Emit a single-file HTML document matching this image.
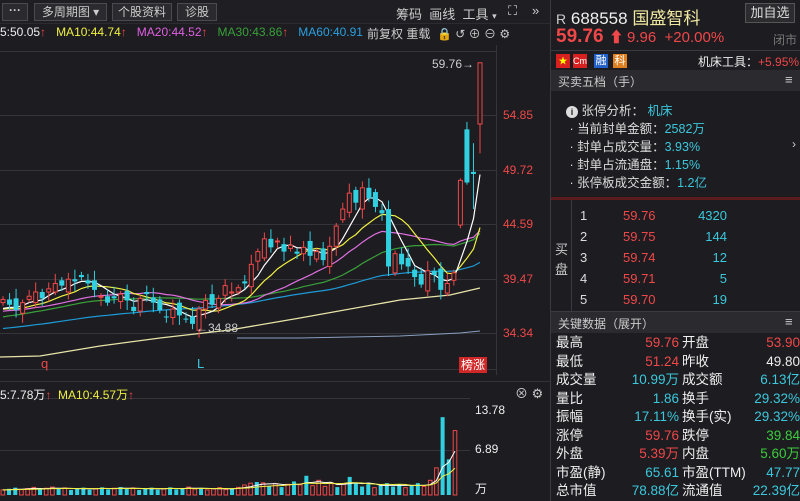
<!DOCTYPE html>
<html><head><meta charset="utf-8"><style>
*{margin:0;padding:0;box-sizing:border-box}
body{width:800px;height:501px;background:#1c1c21;font-family:"Liberation Sans","Noto Sans CJK SC",sans-serif;color:#ddd;overflow:hidden;position:relative;font-size:12px}
.a{position:absolute;white-space:nowrap}
.btn{position:absolute;top:3px;height:18px;border:1px solid #4a4a50;background:#2a2a2f;color:#ccc;font-size:12px;line-height:16px;text-align:center}
.r{color:#f04848}.c{color:#3cc8dc}.g{color:#3ccc3c}.w{color:#eee}.y{color:#f0f040}
.row{position:absolute;left:556px;width:244px;height:18px;font-size:13.5px;line-height:18px}
.row span{position:absolute}
</style></head><body>
<div class="a" style="left:0;top:0;width:550px;height:24px;background:#1e1e23;border-bottom:1px solid #2c2c30"></div>
<div class="btn" style="left:2px;width:26px;font-weight:bold;line-height:13px">···</div>
<div class="btn" style="left:34px;width:73px">多周期图 ▾</div>
<div class="btn" style="left:112px;width:60px">个股资料</div>
<div class="btn" style="left:177px;width:40px">诊股</div>
<div class="a" style="left:396px;top:4px;font-size:13px;color:#ccc">筹码&nbsp;&nbsp;画线&nbsp;&nbsp;工具 <span style="font-size:9px">▾</span></div>
<div class="a" style="left:508px;top:3px;font-size:13px;color:#ccc">⛶</div>
<div class="a" style="left:532px;top:3px;font-size:13px;color:#ccc">»</div>
<div class="a" style="left:0;top:25px;font-size:12px"><span class="w">5:50.05</span><span class="r">↑</span>&nbsp;&nbsp;&nbsp;<span class="y">MA10:44.74</span><span class="r">↑</span>&nbsp;&nbsp;&nbsp;<span style="color:#e060e0">MA20:44.52</span><span class="r">↑</span>&nbsp;&nbsp;&nbsp;<span style="color:#3aa03a">MA30:43.86</span><span class="r">↑</span>&nbsp;&nbsp;&nbsp;<span style="color:#2aa0e0">MA60:40.91</span></div>
<div class="a" style="left:367px;top:25px;font-size:12px;color:#ccc">前复权&nbsp;重载&nbsp;&nbsp;🔒&nbsp;↺&nbsp;⊕&nbsp;⊖&nbsp;⚙</div>
<svg class="a" style="left:0;top:0" width="550" height="501" id="sv"></svg>
<div class="a r" style="left:503px;top:108px">54.85</div>
<div class="a r" style="left:503px;top:163px">49.72</div>
<div class="a r" style="left:503px;top:217px">44.59</div>
<div class="a r" style="left:503px;top:272px">39.47</div>
<div class="a r" style="left:503px;top:326px">34.34</div>
<div class="a" style="left:432px;top:57px;color:#ccc">59.76→</div>
<div class="a" style="left:196px;top:321px;color:#ccc">←34.88</div>
<div class="a r" style="left:41px;top:356px;font-size:13px">q</div>
<div class="a c" style="left:197px;top:356px;font-size:13px">L</div>
<div class="a" style="left:459px;top:357px;background:#d02828;color:#fff;font-size:12px;line-height:16px;padding:0 2px">榜涨</div>
<div class="a" style="left:0;top:386px;font-size:12px"><span class="w">5:7.78万</span><span class="r">↑</span>&nbsp;&nbsp;<span class="y">MA10:4.57万</span><span class="r">↑</span></div>
<div class="a" style="left:515px;top:383px;color:#ccc;font-size:13px">⊗ ⚙</div>
<div class="a w" style="left:475px;top:403px">13.78</div>
<div class="a w" style="left:475px;top:442px">6.89</div>
<div class="a w" style="left:475px;top:480px">万</div>
<div class="a" style="left:550px;top:0;width:1px;height:501px;background:#3a3a40"></div>
<div class="a" style="left:556px;top:4px;font-size:17px"><span style="color:#ccc;font-size:14px">R</span> <span class="w">688558</span> <span style="color:#f0e8a0">国盛智科</span></div>
<div class="a" style="left:745px;top:3px;width:50px;height:20px;border:1px solid #555;background:#2c2c30;color:#ddd;font-size:13px;line-height:18px;text-align:center">加自选</div>
<div class="a r" style="left:556px;top:26px;font-size:19px;font-weight:bold">59.76 <span style="font-size:15px">⬆</span></div>
<div class="a r" style="left:627px;top:29px;font-size:15px">9.96&nbsp;&nbsp;+20.00%</div>
<div class="a" style="left:773px;top:31px;color:#777;font-size:12px">闭市</div>
<div class="a" style="left:551px;top:50px;width:249px;height:1px;background:#3a3a40"></div>
<div class="a" style="left:556px;top:54px;width:14px;height:14px;background:#d82020;color:#ff0;font-size:9px;line-height:14px;text-align:center">★</div>
<div class="a" style="left:573px;top:54px;width:14px;height:14px;background:#d82020;color:#fff;font-size:9px;line-height:14px;text-align:center">Cm</div>
<div class="a" style="left:594px;top:54px;width:14px;height:14px;background:#2060c8;color:#fff;font-size:11px;line-height:14px;text-align:center">融</div>
<div class="a" style="left:613px;top:54px;width:14px;height:14px;background:#e08020;color:#fff;font-size:11px;line-height:14px;text-align:center">科</div>
<div class="a" style="left:698px;top:53px;font-size:12px"><span class="w">机床工具：</span><span class="r">+5.95%</span></div>
<div class="a" style="left:551px;top:70px;width:249px;height:21px;background:#2a2a2f"></div>
<div class="a" style="left:558px;top:73px;color:#ccc;font-size:12px">买卖五档（手）</div>
<div class="a" style="left:785px;top:72px;color:#ccc;font-size:13px">≡</div>
<div class="a" style="left:566px;top:102px;font-size:12.5px;line-height:18px;color:#ddd">
<div><span style="display:inline-block;width:12px;height:12px;border-radius:6px;background:#ddd;color:#222;font-size:9px;text-align:center;line-height:12px;font-weight:bold">i</span> 张停分析： <span class="c">机床</span></div>
<div>&nbsp;· 当前封单金额：<span class="c">2582万</span></div>
<div>&nbsp;· 封单占成交量：<span class="c">3.93%</span></div>
<div>&nbsp;· 封单占流通盘：<span class="c">1.15%</span></div>
<div>&nbsp;· 张停板成交金额：<span class="c">1.2亿</span></div>
</div>
<div class="a" style="left:792px;top:137px;color:#ccc">›</div>
<div class="a" style="left:551px;top:197px;width:249px;height:3px;background:#5a1c1c"></div>
<div class="a" style="left:571px;top:200px;width:1px;height:111px;background:#3a3a40"></div>
<div class="a" style="left:555px;top:240px;color:#ccc;font-size:13px;line-height:20px">买<br>盘</div>
<div class="a" style="left:580px;top:205px;font-size:13px;line-height:21px;color:#ddd">1<br>2<br>3<br>4<br>5</div>
<div class="a r" style="left:623px;top:205px;font-size:13px;line-height:21px">59.76<br>59.75<br>59.74<br>59.71<br>59.70</div>
<div class="a c" style="left:676px;top:205px;width:51px;text-align:right;font-size:13px;line-height:21px">4320<br>144<br>12<br>5<br>19</div>
<div class="a" style="left:551px;top:311px;width:249px;height:22px;background:#2a2a2f;border-top:1px solid #3a3a40"></div>
<div class="a" style="left:558px;top:315px;color:#ccc;font-size:12px">关键数据（展开）</div>
<div class="a" style="left:785px;top:314px;color:#ccc;font-size:13px">≡</div>
<div id="kd"></div>
<script>
var rows=[["最高","59.76","r","开盘","53.90","r"],["最低","51.24","r","昨收","49.80","w"],["成交量","10.99万","c","成交额","6.13亿","c"],["量比","1.86","c","换手","29.32%","c"],["振幅","17.11%","c","换手(实)","29.32%","c"],["涨停","59.76","r","跌停","39.84","g"],["外盘","5.39万","r","内盘","5.60万","g"],["市盈(静)","65.61","c","市盈(TTM)","47.77","c"],["总市值","78.88亿","c","流通值","22.39亿","c"]];
var h="";rows.forEach(function(r,i){var t=334+i*18.5;h+='<div class="row" style="top:'+t+'px"><span class="w" style="left:0">'+r[0]+'</span><span class="'+r[2]+'" style="right:121px">'+r[1]+'</span><span class="w" style="left:126px">'+r[3]+'</span><span class="'+r[5]+'" style="right:0">'+r[4]+'</span></div>'});
document.getElementById("kd").innerHTML=h;
var S='';
function L(x1,y1,x2,y2,c){S+='<line x1="'+x1+'" y1="'+y1+'" x2="'+x2+'" y2="'+y2+'" stroke="'+c+'" stroke-width="1"/>';}
[51,115,170,224,279,333,369].forEach(function(y){L(0,y+.5,497,y+.5,"#34343a")});
L(496.5,45,496.5,375,"#34343a");
L(0,381.5,550,381.5,"#333");L(0,398.5,470,398.5,"#34343a");L(0,450.5,470,450.5,"#34343a");
var C=[37.5,37.0,36.5,37.2,37.8,38.2,37.6,38.5,39.0,38.8,39.4,39.2,39.6,39.0,38.4,37.8,37.2,37.6,38.0,37.4,36.4,37.6,38.0,37.2,36.5,35.8,36.6,36.0,35.6,35.2,36.6,37.4,37.0,37.6,38.8,38.2,38.6,39.0,40.8,42.0,43.2,42.4,43.0,42.0,42.6,41.8,42.4,41.6,42.0,41.2,42.5,44.4,46.0,47.5,46.6,48.0,47.0,46.2,45.6,40.6,41.8,40.8,40.6,39.6,38.9,40.2,39.8,38.4,39.0,40.0,48.7,48.5,49.3,59.76];
var O=[],Hh=[],Lw=[];
for(var i=0;i<C.length;i++){var p=i?C[i-1]:37.8;var o=p+((i*7%5)-2)*0.3;O.push(o);Hh.push(Math.max(o,C[i])+0.3+(i%3)*0.3);Lw.push(Math.min(o,C[i])-0.3-(i%4)*0.2);}
O[70]=44.5;Hh[70]=48.9;Lw[70]=44.2;O[71]=53.5;Hh[71]=54.2;Lw[71]=48.3;O[72]=49.5;Hh[72]=52.2;Lw[72]=46.0;O[73]=54.0;Hh[73]=59.76;Lw[73]=51.24;
O[59]=46.0;
var N=C.length;function X(i){return 3+i*477/(N-1)}function Y(p){return 115+(54.85-p)*10.63}
var pad=[];for(var k=0;k<60;k++)pad.push(32.5+k*0.07+Math.sin(k/6)*0.6);var A=pad.concat(C);
function ma(n,c){var pts=[];for(var i=0;i<N;i++){var s=0;for(var j=0;j<n;j++)s+=A[60+i-j];pts.push(X(i).toFixed(1)+','+Y(s/n).toFixed(1));}S+='<polyline fill="none" stroke="'+c+'" stroke-width="1.2" points="'+pts.join(' ')+'"/>';}
S+='<polyline fill="none" stroke="#e8e4a8" stroke-width="1.3" points="0,357 40,356 100,346 160,338 230,330 300,318 400,300 450,295 480,288"/>';
S+='<polyline fill="none" stroke="#8aa0c0" stroke-width="1" points="237,338 300,338 400,336 460,333 480,331"/>';
ma(60,"#1e9ad6");ma(30,"#3aa03a");ma(20,"#e070e0");ma(10,"#f0f040");ma(5,"#ffffff");
for(var i=0;i<N;i++){var x=X(i),up=C[i]>=O[i],col=up?"#f04848":"#30d0e0";L(x,Y(Hh[i]),x,Y(Lw[i]),col);var t=Y(Math.max(O[i],C[i])),b=Y(Math.min(O[i],C[i]));if(b-t<1)b=t+1;
S+=up?'<rect x="'+(x-2)+'" y="'+t+'" width="4" height="'+(b-t)+'" fill="#1c1c21" stroke="'+col+'"/>':'<rect x="'+(x-2.5)+'" y="'+t+'" width="5" height="'+(b-t)+'" fill="'+col+'"/>';}
var vs=[];for(var i=0;i<N;i++){var v=0.9+((i*37)%11)/20;if(i>38)v=1.4+((i*13)%9)/8;if(i>55)v=1.3+((i*7)%5)/5;vs.push(v);}
vs[69]=2.6;vs[70]=4.8;vs[71]=13.78;vs[72]=6.3;vs[73]=11.4;vs[49]=3.4;vs[51]=2.6;vs[56]=3.2;vs[40]=2.1;vs[41]=2.3;vs[48]=1.8;
var vp5=[],vp10=[];
for(var i=0;i<N;i++){var x=X(i)*455/480,up=C[i]>=O[i],col=up?"#f04848":"#30d0e0",h=vs[i]*5.65,y=495-h;
S+=up?'<rect x="'+(x-1.8)+'" y="'+y+'" width="3.6" height="'+h+'" fill="#1c1c21" stroke="'+col+'"/>':'<rect x="'+(x-2)+'" y="'+y+'" width="4" height="'+h+'" fill="'+col+'"/>';
var s5=0,s10=0;for(var j=0;j<10;j++){var q=vs[Math.max(0,i-j)];if(j<5)s5+=q;s10+=q;}vp5.push(x.toFixed(1)+','+(495-s5/5*5.65).toFixed(1));vp10.push(x.toFixed(1)+','+(495-s10/10*5.65).toFixed(1));}
S+='<polyline fill="none" stroke="#fff" stroke-width="1" points="'+vp5.join(' ')+'"/><polyline fill="none" stroke="#f0f040" stroke-width="1" points="'+vp10.join(' ')+'"/>';
document.getElementById("sv").innerHTML=S;
</script>
</body></html>
